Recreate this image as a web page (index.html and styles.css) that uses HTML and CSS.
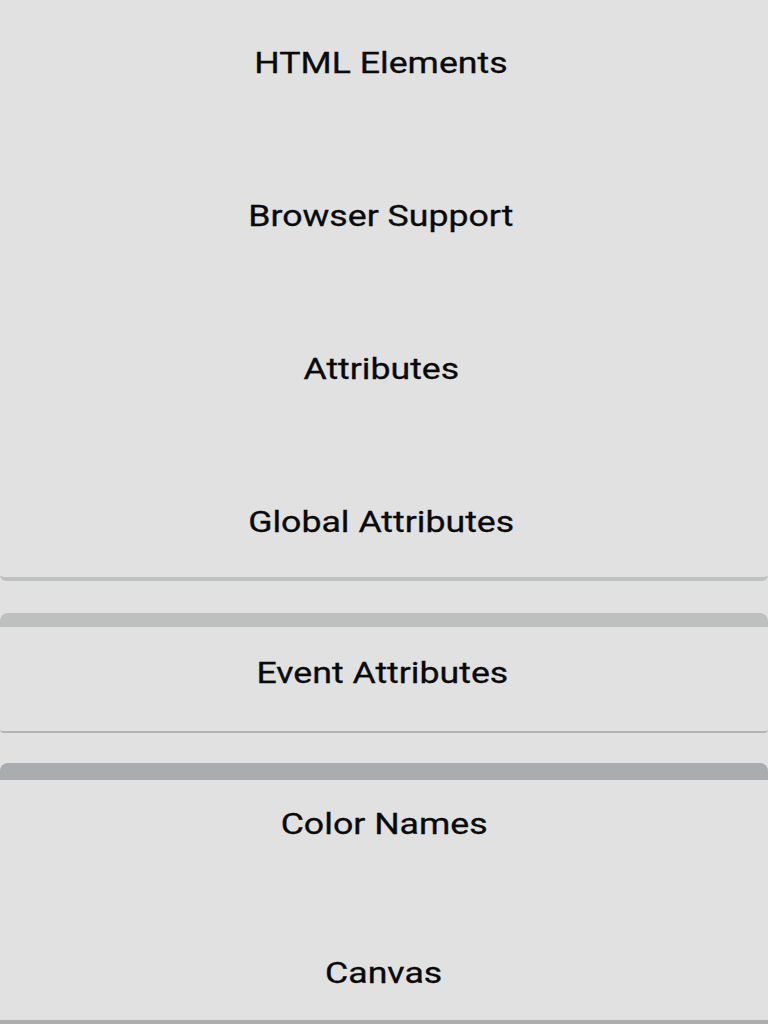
FILE: index.html
```html
<!DOCTYPE html>
<html lang="en">
<head>
<meta charset="utf-8">
<title>HTML Reference</title>
<link rel="stylesheet" href="styles.css">
</head>
<body>
<main class="list">
  <section class="card card-first">
    <a class="item" href="#"><span class="label">HTML Elements</span></a>
    <a class="item" href="#"><span class="label">Browser Support</span></a>
    <a class="item" href="#"><span class="label">Attributes</span></a>
    <a class="item" href="#"><span class="label">Global Attributes</span></a>
  </section>
  <section class="card card-second">
    <a class="item" href="#"><span class="label">Event Attributes</span></a>
  </section>
  <section class="card card-third">
    <a class="item" href="#"><span class="label">Color Names</span></a>
    <a class="item" href="#"><span class="label">Canvas</span></a>
  </section>
</main>
</body>
</html>
```
FILE: styles.css
```css
html, body {
  margin: 0;
  padding: 0;
  background: #e1e1e1;
}
body {
  font-family: Roboto, "Liberation Sans", sans-serif;
  color: #0a0a0a;
  height: 1024px;
  overflow: hidden;
}
.list {
  display: flex;
  flex-direction: column;
}
.card {
  display: flex;
  flex-direction: column;
  background: #e1e1e1;
}
.item {
  display: block;
  text-align: center;
  text-decoration: none;
  color: #0a0a0a;
  height: 34px;
  line-height: 34px;
}
.label {
  display: inline-block;
  font-size: 29px;
  font-weight: 400;
  transform: scaleX(1.23);
  -webkit-text-stroke: 0.3px #0a0a0a;
}
.card-first {
  border-bottom: 4px solid #bdc1c0;
  border-radius: 0 0 6px 6px;
}
.card-first .item {
  padding: 46px 6px 73px 0;
}
.card-first .item:last-child {
  padding-bottom: 38px;
}
.card-second {
  margin-top: 32px;
  border-top: 14px solid #bcc0bf;
  border-bottom: 2px solid #b0b4b5;
  border-radius: 8px 8px 4px 4px;
}
.card-second .item {
  padding: 29px 3px 41px 0;
}
.card-third {
  margin-top: 30px;
  border-top: 17px solid #a9adb0;
  border-bottom: 4px solid #adadad;
  border-radius: 8px 8px 0 0;
}
.card-third .item {
  padding: 27px 0 80px;
}
.card-third .item:last-child {
  padding-top: 35px;
  padding-bottom: 30px;
}
```
